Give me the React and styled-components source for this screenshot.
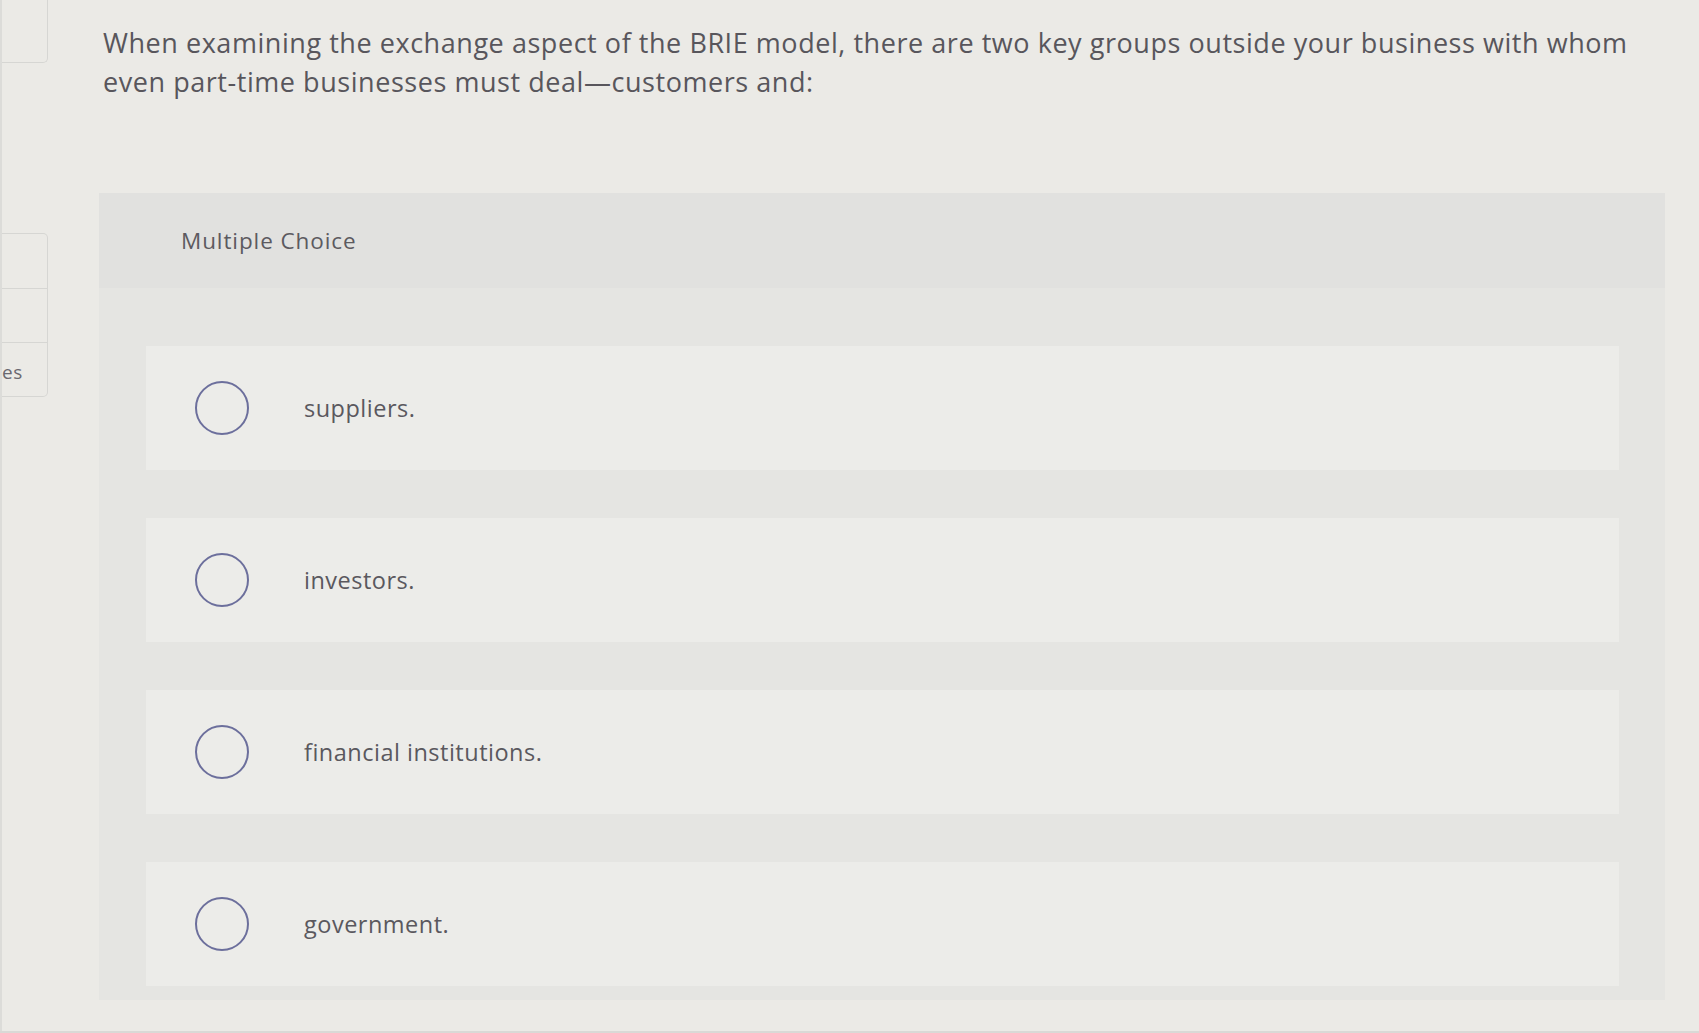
import styled, { createGlobalStyle } from 'styled-components';

const Global = createGlobalStyle`
  html, body {
    margin: 0;
    padding: 0;
    background: #ebeae6;
  }
  body {
    font-family: "Open Sans", Lato, sans-serif;
    color: #5f5d62;
  }
`;

const Page = styled.div`
  display: flex;
  width: 1699px;
  height: 1033px;
  overflow: hidden;
  background: #ebeae6;
  border-bottom: 2px solid #d9d9d6;
  box-sizing: border-box;
`;

const Sidebar = styled.aside`
  width: 46px;
  flex-shrink: 0;
  display: flex;
  flex-direction: column;
  border-left: 2px solid #dcdcd9;
`;

const TopStub = styled.div`
  height: 62px;
  border-right: 1px solid #d6d6d3;
  border-bottom: 1px solid #d6d6d3;
  border-bottom-right-radius: 5px;
`;

const StubGroup = styled.div`
  margin-top: 170px;
  border: 1px solid #d6d6d3;
  border-left: none;
  border-radius: 0 5px 5px 0;
  display: flex;
  flex-direction: column;
`;

const StubCell = styled.div`
  height: 54px;
  border-top: ${(p) => (p.$first ? 'none' : '1px solid #d6d6d3')};
  display: flex;
  align-items: center;
  font-size: 19px;
  letter-spacing: 0.5px;
  color: #6a6870;
  padding-top: 4px;
  box-sizing: border-box;
`;

const Main = styled.main`
  flex: 1;
  padding: 23px 34px 0 51px;
  display: flex;
  flex-direction: column;
`;

const Question = styled.p`
  margin: 0 0 0 4px;
  font-size: 27px;
  letter-spacing: 0.55px;
  line-height: 39px;
  color: #58565c;
  max-width: 1540px;
`;

const Card = styled.section`
  margin-top: 92px;
  background: #e5e5e2;
  display: flex;
  flex-direction: column;
  padding-bottom: 14px;
`;

const CardHeader = styled.div`
  height: 95px;
  background: #e1e1df;
  display: flex;
  align-items: center;
  padding-left: 82px;
  font-size: 22.5px;
  letter-spacing: 0.9px;
  color: #5c5a60;
`;

const Options = styled.div`
  display: flex;
  flex-direction: column;
  gap: 48px;
  padding: 58px 46px 0 47px;
`;

const Option = styled.label`
  height: 124px;
  background: #ecece9;
  display: flex;
  align-items: center;
  padding-left: 49px;
  cursor: pointer;
`;

const Radio = styled.span`
  width: 50px;
  height: 50px;
  border: 2px solid #6c6f9c;
  border-radius: 50%;
  flex-shrink: 0;
`;

const OptionText = styled.span`
  margin-left: 55px;
  font-size: 23.5px;
  letter-spacing: 0.5px;
  color: #5a585e;
`;

const choices = ['suppliers.', 'investors.', 'financial institutions.', 'government.'];

export default function App() {
  return (
    <>
      <Global />
      <Page>
        <Sidebar>
          <TopStub />
          <StubGroup>
            <StubCell $first />
            <StubCell />
            <StubCell>es</StubCell>
          </StubGroup>
        </Sidebar>
        <Main>
          <Question>
            When examining the exchange aspect of the BRIE model, there are two key groups outside
            your business with whom even part-time businesses must deal—customers and:
          </Question>
          <Card>
            <CardHeader>Multiple Choice</CardHeader>
            <Options>
              {choices.map((c) => (
                <Option key={c}>
                  <Radio />
                  <OptionText>{c}</OptionText>
                </Option>
              ))}
            </Options>
          </Card>
        </Main>
      </Page>
    </>
  );
}
